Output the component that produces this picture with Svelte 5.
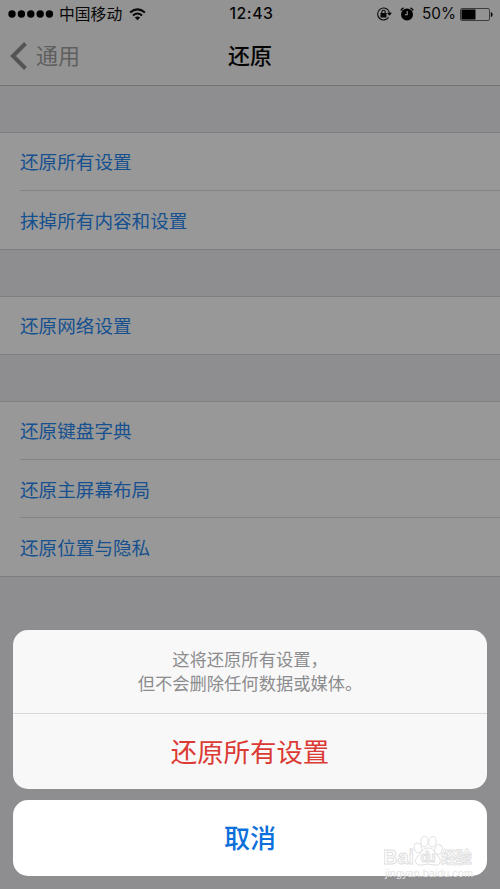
<script>
    const groups = [
        ['还原所有设置', '抹掉所有内容和设置'],
        ['还原网络设置'],
        ['还原键盘字典', '还原主屏幕布局', '还原位置与隐私'],
    ];

    let sheetOpen = true;

    function closeSheet() {
        sheetOpen = false;
    }

    function openSheet() {
        sheetOpen = true;
    }
</script>

<div class="screen">
    <header>
        <div class="status">
            <div class="carrier">
                <svg class="dots" width="46" height="8" viewBox="0 0 46 8">
                    {#each [4, 13.4, 22.8, 32.2, 41.4] as cx}
                        <circle {cx} cy="4" r="3.7" />
                    {/each}
                </svg>
                <span>中国移动</span>
                <svg class="wifi" width="17" height="13" viewBox="0 0 17 13">
                    <path d="M1.1 4.6 Q8.5 -1.8 15.9 4.6" />
                    <path d="M3.9 7.5 Q8.5 3.5 13.1 7.5" />
                    <path class="solid" d="M8.5 12.2 L5.8 9.5 Q8.5 7.3 11.2 9.5 Z" />
                </svg>
            </div>
            <div class="time">12:43</div>
            <div class="indicators">
                <svg class="lock" width="16" height="14" viewBox="0 0 16 14">
                    <path d="M12.5 3.5 A6 6 0 1 0 12.6 10.3" />
                    <path d="M12.5 3.5 Q13.3 4.7 13.4 6.4" />
                    <path class="solid" d="M10.8 5.8 H16 L13.4 8.8 Z" />
                    <rect class="solid" x="4.5" y="6" width="6" height="4.4" rx=".4" />
                    <path d="M5.8 6.4 V5 A1.7 1.7 0 0 1 9.2 5 V6.4" />
                </svg>
                <svg class="alarm" width="14" height="14" viewBox="0 0 14 14">
                    <circle cx="7" cy="7.4" r="6" />
                    <path class="bell" d="M.9 3.6 Q1.4 1.7 3.6 1 M13.1 3.6 Q12.6 1.7 10.4 1" />
                    <path class="hand" d="M7.2 4 V7.7 H4.8" />
                </svg>
                <span class="percent">50%</span>
                <svg class="battery" width="33" height="13" viewBox="0 0 33 13">
                    <rect class="case" x=".5" y=".5" width="29" height="12" rx="1.6" />
                    <rect x="1.5" y="1.5" width="14" height="10" rx=".5" />
                    <path d="M30.8 4 Q32.6 4.5 32.6 6.5 Q32.6 8.5 30.8 9 Z" />
                </svg>
            </div>
        </div>
        <nav>
            <button class="back">
                <svg width="18" height="28" viewBox="0 0 18 28">
                    <path d="M15.5 1.5 L3 14 L15.5 26.5" />
                </svg>
                <span>通用</span>
            </button>
            <h1>还原</h1>
            <div></div>
        </nav>
    </header>

    <main>
        {#each groups as rows}
            <section>
                {#each rows as label}
                    <button class="row" on:click={openSheet}><span>{label}</span></button>
                {/each}
            </section>
        {/each}
    </main>

    {#if sheetOpen}
        <div class="sheet">
            <div class="options">
                <p>这将还原所有设置，<br />但不会删除任何数据或媒体。</p>
                <button class="destructive" on:click={closeSheet}>还原所有设置</button>
            </div>
            <button class="cancel" on:click={closeSheet}>取消</button>
        </div>
    {/if}

    <svg class="watermark" width="94" height="48" viewBox="0 0 94 48">
        <g class="paw">
            <ellipse cx="34" cy="14" rx="3.7" ry="5" transform="rotate(-15 34 14)" />
            <ellipse cx="40.5" cy="7.5" rx="3.7" ry="5.3" />
            <ellipse cx="48.5" cy="7.8" rx="3.7" ry="5.3" transform="rotate(8 48.5 7.8)" />
            <ellipse cx="54.5" cy="15.5" rx="3.7" ry="5" transform="rotate(15 54.5 15.5)" />
            <path d="M44 14 C38 14 38 19 34 22 C29 27 32 32 38 31 Q44 29 50 31 C57 32 58 27 54 22 C50 19 50 14 44 14 Z" />
        </g>
        <text class="brand" x="-1" y="30" textLength="31" lengthAdjust="spacingAndGlyphs">Bai</text>
        <text class="du" x="36.5" y="28" textLength="15">du</text>
        <text class="cjk" x="57" y="29" textLength="31">经验</text>
        <text class="url" x="1" y="42.5" textLength="88" lengthAdjust="spacingAndGlyphs">jingyan.baidu.com</text>
    </svg>
</div>

<style>
    :global(body) {
        margin: 0;
    }

    .screen {
        position: relative;
        box-sizing: border-box;
        height: 889px;
        overflow: hidden;
        background: #8e8e91;
        font-family: 'Liberation Sans', 'Noto Sans CJK SC', sans-serif;
    }

    button {
        border: none;
        padding: 0;
        background: none;
        font-family: inherit;
        cursor: pointer;
    }

    header {
        box-sizing: border-box;
        height: 86px;
        background: #939393;
        border-bottom: 1px solid #737374;
    }

    .status {
        display: grid;
        grid-template-columns: 1fr auto 1fr;
        align-items: center;
        height: 28px;
        padding: 0 7px 0 8px;
        color: #080808;
        font-size: 15.8px;
        line-height: 28px;
    }

    .carrier,
    .indicators {
        display: flex;
        align-items: center;
    }

    .carrier span {
        margin-left: 5px;
        padding-top: 1px;
        line-height: 27px;
    }

    .wifi {
        margin-left: 7px;
        fill: none;
        stroke: #080808;
        stroke-width: 2;
    }

    .solid {
        fill: #080808;
        stroke: none;
    }

    .time {
        padding-left: 2px;
        font-family: Inter, sans-serif;
        font-size: 15.8px;
        font-weight: 500;
        letter-spacing: 0.5px;
    }

    .indicators {
        justify-content: flex-end;
    }

    .lock {
        fill: none;
        stroke: #080808;
        stroke-width: 1.1;
    }

    .alarm {
        margin-left: 8px;
    }

    .bell {
        fill: none;
        stroke: #080808;
        stroke-width: 1.4;
    }

    .hand {
        fill: none;
        stroke: #939393;
        stroke-width: 1.1;
    }

    .percent {
        margin-left: 8px;
        font-family: Inter, sans-serif;
        font-size: 15.3px;
    }

    .battery {
        margin-left: 4px;
    }

    .case {
        fill: none;
        stroke: #3c3c3c;
    }

    nav {
        display: grid;
        grid-template-columns: 1fr auto 1fr;
        align-items: center;
        height: 56px;
    }

    .back {
        display: flex;
        align-items: center;
        gap: 8px;
        padding-left: 10px;
        color: #5f5f5f;
        font-size: 22px;
        line-height: 32px;
    }

    .back svg {
        fill: none;
        stroke: #545454;
        stroke-width: 4;
    }

    .back span {
        padding-top: 2px;
    }

    h1 {
        margin: 0;
        padding-top: 2px;
        color: #050505;
        font-size: 22px;
        font-weight: 500;
        line-height: 32px;
    }

    main {
        display: flex;
        flex-direction: column;
        gap: 46.2px;
        padding-top: 46px;
    }

    section {
        background: #989898;
        border-top: 1px solid #7e7e81;
        border-bottom: 1px solid #7e7e81;
    }

    .row {
        display: block;
        width: 100%;
        padding-left: 20px;
        color: #16508f;
        font-size: 18.6px;
        text-align: left;
    }

    .row span {
        display: block;
        height: 57px;
        line-height: 60px;
    }

    .row + .row span {
        height: 57.5px;
        line-height: 61px;
        border-top: 1px solid #838384;
    }

    .sheet {
        position: absolute;
        left: 13px;
        right: 13px;
        bottom: 13px;
        display: flex;
        flex-direction: column;
        gap: 11px;
    }

    .options {
        height: 159px;
        border-radius: 15px;
        background: #f8f8f8;
        overflow: hidden;
    }

    p {
        box-sizing: border-box;
        height: 84px;
        margin: 0;
        padding-top: 18px;
        border-bottom: 1px solid #d9d9db;
        color: #8c8c8e;
        font-size: 17.3px;
        line-height: 24px;
        text-align: center;
    }

    .destructive {
        display: block;
        width: 100%;
        height: 75px;
        padding-bottom: 2px;
        color: #db3a35;
        font-size: 26.4px;
    }

    .cancel {
        height: 76px;
        padding-bottom: 3px;
        border-radius: 15px;
        background: #fff;
        color: #0d70da;
        font-size: 26px;
        font-weight: 500;
    }

    .watermark {
        position: absolute;
        left: 384px;
        top: 834px;
        pointer-events: none;
    }

    .paw,
    .brand,
    .du,
    .cjk {
        fill: #fff;
        stroke: #e0e0e0;
        stroke-width: 1;
    }

    .brand,
    .du,
    .cjk {
        font-weight: 700;
    }

    .brand {
        font-size: 21px;
    }

    .cjk {
        font-size: 16px;
        stroke-width: 0.8;
    }

    .du {
        font-size: 14px;
    }

    .url {
        fill: #e5e5e5;
        font-size: 10.5px;
    }
</style>
